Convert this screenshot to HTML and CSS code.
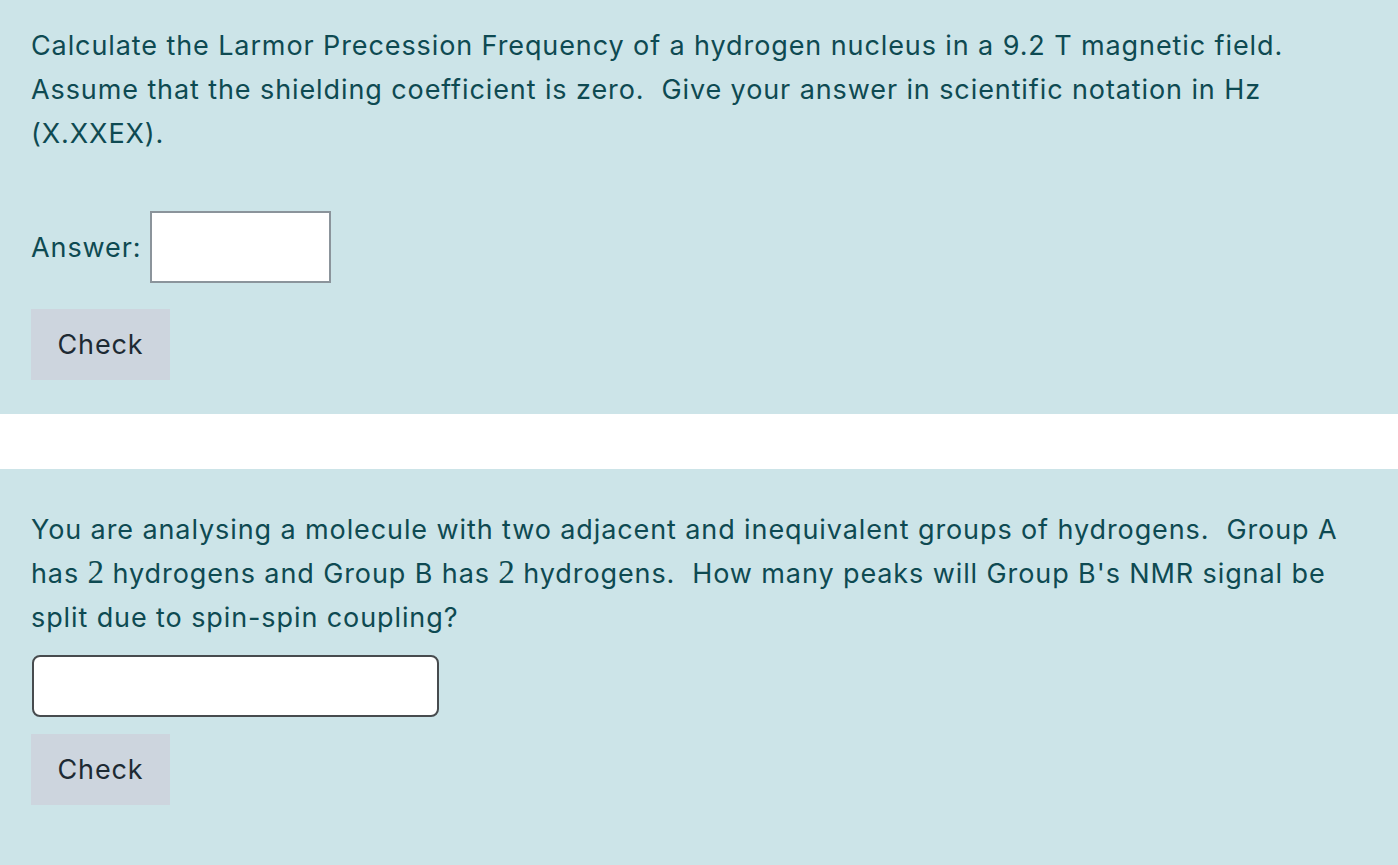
FILE: index.html
```html
<!DOCTYPE html>
<html lang="en">
<head>
    <meta charset="UTF-8">
    <meta name="viewport" content="width=device-width, initial-scale=1.0">
    <title>Quiz</title>
    <link rel="stylesheet" href="styles.css">
</head>
<body>
    <div class="question first">
        <p class="qtext">Calculate the Larmor Precession Frequency of a hydrogen nucleus in a 9.2 T magnetic field.<br>Assume that the shielding coefficient is zero.&nbsp; Give your answer in scientific notation in Hz<br>(X.XXEX).</p>
        <div class="answer-row">
            <label for="a1">Answer:</label>
            <input id="a1" class="short-input" type="text">
        </div>
        <button class="check">Check</button>
    </div>

    <div class="question second">
        <p class="qtext">You are analysing a molecule with two adjacent and inequivalent groups of hydrogens.&nbsp; Group A<br>has <span class="math">2</span> hydrogens and Group B has <span class="math">2</span> hydrogens.&nbsp; How many peaks will Group B's NMR signal be<br>split due to spin-spin coupling?</p>
        <input class="wide-input" type="text">
        <button class="check">Check</button>
    </div>
</body>
</html>
```

FILE: styles.css
```css
body { margin: 0; font-family: Inter, "Liberation Sans", sans-serif; font-size: 27px; letter-spacing: 0.9px; color: #0e4a52; background: #fff; }
.question { background-color: #cce4e8; padding: 0 31px; }
.first { padding-top: 24px; padding-bottom: 34px; margin-bottom: 55px; }
.second { padding-top: 39px; padding-bottom: 61px; }
.qtext { margin: 0; line-height: 44px; }
.math { font-family: "Liberation Serif", serif; font-size: 33px; line-height: 1; letter-spacing: 0; }
.answer-row { display: flex; align-items: center; gap: 9px; margin-top: 55px; }
.short-input { width: 181px; height: 72px; box-sizing: border-box; border: 2px solid #8b949b; background: #fff; margin: 0; }
.wide-input { display: block; width: 407px; height: 62px; box-sizing: border-box; border: 2px solid #474b4e; border-radius: 8px; background: #fff; margin: 15px 0 0 1px; }
.check { display: block; width: 139px; height: 71px; border: none; background: #cdd5de; color: #1d2a33; font-family: inherit; font-size: 27px; letter-spacing: 0.9px; margin-top: 26px; padding: 0; }
.second .check { margin-top: 17px; }
```
